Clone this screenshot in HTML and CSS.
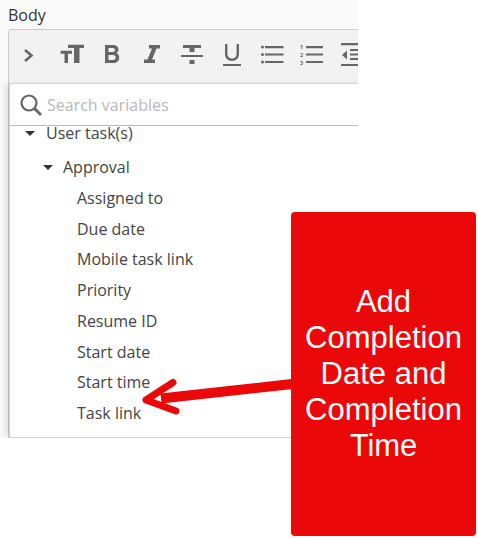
FILE: index.html
```html
<!DOCTYPE html>
<html lang="en">

<head>
	<meta charset="UTF-8">
	<meta name="viewport" content="width=device-width, initial-scale=1.0">
	<title>Body editor</title>
	<link rel="stylesheet" href="styles.css">
</head>

<body>
	<div class="page">
		<div class="field-label">Body</div>
		<div class="editor">
			<div class="toolbar">
				<svg class="tool" width="24" height="24" viewBox="0 0 24 24"><path d="M9 8l6.500 5.500L9 19" fill="none" stroke="#666" stroke-width="2.600"/></svg>
				<svg class="tool tool-first" width="24" height="24" viewBox="0 0 24 24"><path d="M.6 8.700h11.400v3H8v9.300H4.500v-9.300H.6zM8 2.700h16v3.300h-4.500v15H14V6H8z" fill="#666"/></svg>
				<svg class="tool" width="24" height="24" viewBox="0 0 24 24"><path fill-rule="evenodd" d="M5 3h8c3.500 0 5.500 1.800 5.500 4.500 0 1.600-.9 3-2.500 3.600 2 .6 3.200 2.100 3.200 4.300 0 3.300-2.200 5.600-6 5.600H5zm3.500 3v4h4c1.500 0 2.500-.7 2.500-2s-1-2-2.500-2zm0 7v5h4.500c1.700 0 2.700-1 2.700-2.500S14.700 13 13 13z" fill="#666"/></svg>
				<svg class="tool" width="24" height="24" viewBox="0 0 24 24"><path d="M9 3h11v3.500h-3.500l-4.500 11h3V21H4v-3.500h3.500l4.500-11H9z" fill="#666"/></svg>
				<svg class="tool" width="24" height="24" viewBox="0 0 24 24"><path d="M3 3h18v3h-6.500v4h-5V6H3zM1 13h22v2H1zM9.500 18h5v4h-5z" fill="#666"/></svg>
				<svg class="tool" width="24" height="24" viewBox="0 0 24 24"><path d="M5 2h2.400v9.500c0 3.300 1.800 5 4.600 5s4.600-1.700 4.600-5V2H19v9.500c0 4.700-2.800 7.500-7 7.500s-7-2.800-7-7.500zM3 22h18v2.400H3z" fill="#666"/></svg>
				<svg class="tool" width="24" height="24" viewBox="0 0 24 24"><path d="M5 4h18.500v2.200H5zM5 11.400h18.500v2.200H5zM5 18.900h18.500v2.200H5z" fill="#666"/><circle cx="2.500" cy="5.100" r="1.500" fill="#666"/><circle cx="2.500" cy="12.500" r="1.500" fill="#666"/><circle cx="2.500" cy="20" r="1.500" fill="#666"/></svg>
				<svg class="tool" width="24" height="24" viewBox="0 0 24 24">
					<path d="M6 4h17v2.200H6zM6 11.400h17v2.200H6zM6 18.900h17v2.200H6z" fill="#666"/>
					<text class="tool-digit" x="0" y="7">1</text>
					<text class="tool-digit" x="0" y="15">2</text>
					<text class="tool-digit" x="0" y="23">3</text>
				</svg>
				<svg class="tool" width="24" height="24" viewBox="0 0 24 24"><path d="M1 1h23v2.200H1zM10 7h14v2H10zM10 11.500h14v2H10zM10 16h14v2H10zM1 22h23v2H1zM7 8.500v9l-5-4.500z" fill="#666"/></svg>
			</div>
			<div class="variables">
				<div class="search">
					<svg width="24" height="24" viewBox="0 0 24 24"><circle cx="10" cy="10" r="7.500" fill="none" stroke="#666" stroke-width="2.200"/><path d="M15.500 15.500l6.500 6.500" stroke="#666" stroke-width="2.800"/></svg>
					<span class="search-text">Search variables</span>
				</div>
				<div class="tree">
					<div class="group group-top"><span class="caret"></span>User task(s)</div>
					<div class="group group-sub"><span class="caret"></span>Approval</div>
					<div class="item">Assigned to</div>
					<div class="item">Due date</div>
					<div class="item">Mobile task link</div>
					<div class="item">Priority</div>
					<div class="item">Resume ID</div>
					<div class="item">Start date</div>
					<div class="item">Start time</div>
					<div class="item">Task link</div>
				</div>
			</div>
		</div>
	</div>

	<svg class="arrow" width="160" height="50" viewBox="0 0 160 50">
		<path d="M155 14L24 28.500" fill="none" stroke="#ea0808" stroke-width="10"/>
		<path d="M36 12.500L9 30l30 11" fill="none" stroke="#ea0808" stroke-width="7" stroke-linecap="round" stroke-linejoin="round"/>
	</svg>
	<div class="callout">Add Completion Date and Completion Time</div>
</body>

</html>
```

FILE: styles.css
```css
body {
	font-family: "Open Sans", sans-serif;
	background-color: white;
	margin: 0;
	padding: 0;
}

.page {
	width: 358px;
	height: 438px;
	overflow: hidden;
	background: #fafafa;
	padding-left: 8px;
	box-sizing: border-box;
}

.field-label {
	height: 29px;
	padding-top: 5px;
	box-sizing: border-box;
	font-size: 16px;
	line-height: 20px;
	color: #333;
}

.editor {
	width: 380px;
	height: 420px;
	background: #f2f2f2;
	border: 1px solid #ccc;
	border-radius: 3px 0 0 0;
}

.toolbar {
	display: flex;
	align-items: center;
	height: 53px;
	padding-left: 7px;
	padding-bottom: 5px;
	gap: 16px;
	overflow: hidden;
	box-sizing: border-box;
}

.tool {
	flex-shrink: 0;
}

.tool-first {
	margin-left: 4px;
}

.tool-digit {
	font-family: "Open Sans", sans-serif;
	font-size: 5.500px;
	font-weight: bold;
	fill: #666;
}

.variables {
	background: white;
	border: 1px solid #d4d4d4;
	border-right: none;
	box-shadow: -5px 0 6px -1px rgba(0, 0, 0, 0.1);
	height: 355px;
	box-sizing: border-box;
	overflow: hidden;
	border-radius: 3px 0 0 3px;
}

.search {
	display: flex;
	align-items: center;
	gap: 4px;
	height: 42px;
	padding-left: 9px;
	box-sizing: border-box;
	border-bottom: 1px solid #bbb;
}

.search-text {
	font-size: 16px;
	color: #b8b8b8;
}

.tree {
	font-size: 16px;
	color: #444;
	margin-top: -4px;
	line-height: 22px;
}

.group {
	display: flex;
	align-items: center;
}

.group-top {
	padding-left: 36px;
	height: 22px;
}

.group-sub {
	padding-left: 53px;
	height: 22px;
	margin-top: 12px;
	margin-bottom: 9px;
}

.caret {
	width: 0;
	height: 0;
	border-left: 5px solid transparent;
	border-right: 5px solid transparent;
	border-top: 5px solid #333;
	margin-left: -20px;
	margin-right: 10px;
}

.group-top .caret {
	margin-left: -21px;
	margin-right: 11px;
}

.item {
	padding-left: 67px;
	height: 22px;
	margin-bottom: 8.720px;
}

/* annotation laid over the screenshot */
.callout {
	position: absolute;
	left: 291px;
	top: 212px;
	width: 185px;
	height: 324px;
	display: flex;
	align-items: center;
	justify-content: center;
	box-sizing: border-box;
	padding: 0 8px;
	background: #ea0808;
	border-radius: 4px;
	color: white;
	font-family: "Liberation Sans", Arial, sans-serif;
	font-size: 31px;
	line-height: 36px;
	text-align: center;
}

.arrow {
	position: absolute;
	left: 137px;
	top: 370px;
}
```
